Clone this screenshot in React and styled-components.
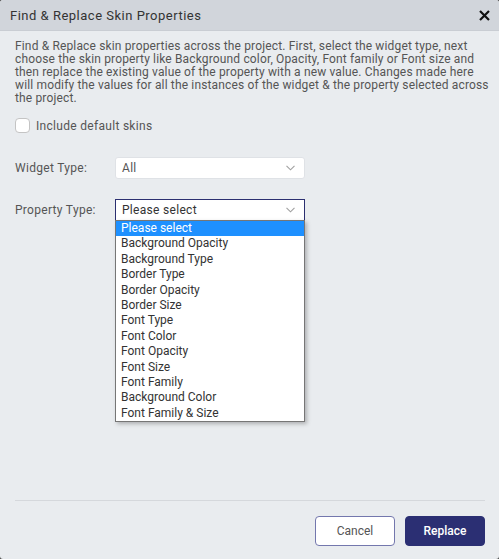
import React from 'react';
import styled, { createGlobalStyle } from 'styled-components';

const GlobalStyle = createGlobalStyle`
  html, body {
    margin: 0;
    padding: 0;
    background: #4a4a4a;
  }
  body {
    font-family: Roboto, 'Liberation Sans', sans-serif;
  }
  * {
    box-sizing: border-box;
  }
`;

const propertyOptions = [
  'Please select',
  'Background Opacity',
  'Background Type',
  'Border Type',
  'Border Opacity',
  'Border Size',
  'Font Type',
  'Font Color',
  'Font Opacity',
  'Font Size',
  'Font Family',
  'Background Color',
  'Font Family & Size',
];

function Chevron() {
  return (
    <svg width='9' height='6' viewBox='0 0 9 6'>
      <path d='M0.5 0.8 L4.5 4.8 L8.5 0.8' fill='none' stroke='#a0a0a0' strokeWidth='1.1' />
    </svg>
  );
}

function App() {
  return (
    <>
      <GlobalStyle />
      <Dialog>
        <Header>
          <Title>Find &amp; Replace Skin Properties</Title>
          <Close>
            <svg width='11' height='11' viewBox='0 0 11 11'>
              <path d='M1 1 L10 10 M10 1 L1 10' stroke='#111' strokeWidth='2.2' />
            </svg>
          </Close>
        </Header>
        <Body>
          <Description>
            Find &amp; Replace skin properties across the project. First, select
            the widget type, next
            <br />
            choose the skin property like Background color, Opacity, Font family
            or Font size and
            <br />
            then replace the existing value of the property with a new value.
            Changes made here
            <br />
            will modify the values for all the instances of the widget &amp; the
            property selected across
            <br />
            the project.
          </Description>
          <CheckRow>
            <CheckBox />
            <span>Include default skins</span>
          </CheckRow>
          <FieldRow $top={24}>
            <Label>Widget Type:</Label>
            <Select>
              <span>All</span>
              <Chevron />
            </Select>
          </FieldRow>
          <FieldRow $top={20}>
            <Label>Property Type:</Label>
            <SelectWrap>
              <Select $open>
                <span>Please select</span>
                <Chevron />
              </Select>
              <OptionList>
                {propertyOptions.map((opt, i) => (
                  <Option key={opt} $active={i === 0}>
                    {opt}
                  </Option>
                ))}
              </OptionList>
            </SelectWrap>
          </FieldRow>
        </Body>
        <Footer>
          <Button>Cancel</Button>
          <Button $primary>Replace</Button>
        </Footer>
      </Dialog>
    </>
  );
}

export default App;

const Dialog = styled.div`
  display: flex;
  flex-direction: column;
  width: 499px;
  height: 559px;
  background: #e9ecef;
  border-radius: 3px;
  overflow: hidden;
`;

const Header = styled.div`
  display: flex;
  align-items: center;
  justify-content: space-between;
  height: 31px;
  padding: 1px 9px 0 10px;
  background: #d1d5db;
  border-bottom: 1px solid #c9cdd3;
`;

const Title = styled.div`
  font-size: 13px;
  color: #333;
  letter-spacing: 0.5px;
`;

const Close = styled.div`
  display: flex;
  align-items: center;
  svg {
    display: block;
  }
`;

const Body = styled.div`
  flex: 1;
  padding: 9px 15px 0 15px;
`;

const Description = styled.p`
  margin: 0;
  font-size: 12px;
  line-height: 13px;
  letter-spacing: 0.15px;
  white-space: nowrap;
  color: #555;
`;

const CheckRow = styled.label`
  display: flex;
  align-items: center;
  gap: 6px;
  margin-top: 13px;
  font-size: 12px;
  letter-spacing: 0.3px;
  color: #555;
`;

const CheckBox = styled.span`
  width: 15px;
  height: 15px;
  background: #fff;
  border: 1px solid #c4c4c4;
  border-radius: 4px;
`;

const FieldRow = styled.div`
  display: flex;
  align-items: center;
  margin-top: ${({ $top }) => $top}px;
`;

const Label = styled.div`
  width: 100px;
  font-size: 12px;
  letter-spacing: 0.3px;
  color: #555;
`;

const SelectWrap = styled.div`
  position: relative;
`;

const Select = styled.div`
  display: flex;
  align-items: center;
  justify-content: space-between;
  width: 190px;
  height: 22px;
  padding: 0 9px 0 6px;
  background: #fff;
  border: 1px solid ${({ $open }) => ($open ? '#2b2f70' : '#dfe2e6')};
  border-radius: ${({ $open }) => ($open ? '0' : '3px')};
  font-size: 12px;
  letter-spacing: 0.3px;
  color: ${({ $open }) => ($open ? '#333' : '#555')};
  svg {
    display: block;
  }
`;

const OptionList = styled.div`
  position: absolute;
  top: 21px;
  left: 0;
  width: 190px;
  background: #fff;
  border: 1px solid #767676;
  box-shadow: 2px 2px 4px rgba(0, 0, 0, 0.25);
  z-index: 2;
`;

const Option = styled.div`
  height: 15.4px;
  line-height: 15.4px;
  padding-left: 5px;
  font-size: 12px;
  color: ${({ $active }) => ($active ? '#fff' : '#333')};
  background: ${({ $active }) => ($active ? '#1e90ff' : 'transparent')};
  white-space: nowrap;
`;

const Footer = styled.div`
  display: flex;
  justify-content: flex-end;
  gap: 10px;
  margin: 0 14px 0 15px;
  padding: 15px 0 13px;
  border-top: 1px solid #d5d8dc;
`;

const Button = styled.button`
  width: 80px;
  height: 30px;
  font-family: Roboto, 'Liberation Sans', sans-serif;
  font-size: 12px;
  font-weight: ${({ $primary }) => ($primary ? 500 : 400)};
  color: ${({ $primary }) => ($primary ? '#fff' : '#555')};
  background: ${({ $primary }) => ($primary ? '#2b2f73' : '#fff')};
  border: 1px solid ${({ $primary }) => ($primary ? '#2b2f73' : '#7377ad')};
  border-radius: 4px;
  cursor: pointer;
`;
